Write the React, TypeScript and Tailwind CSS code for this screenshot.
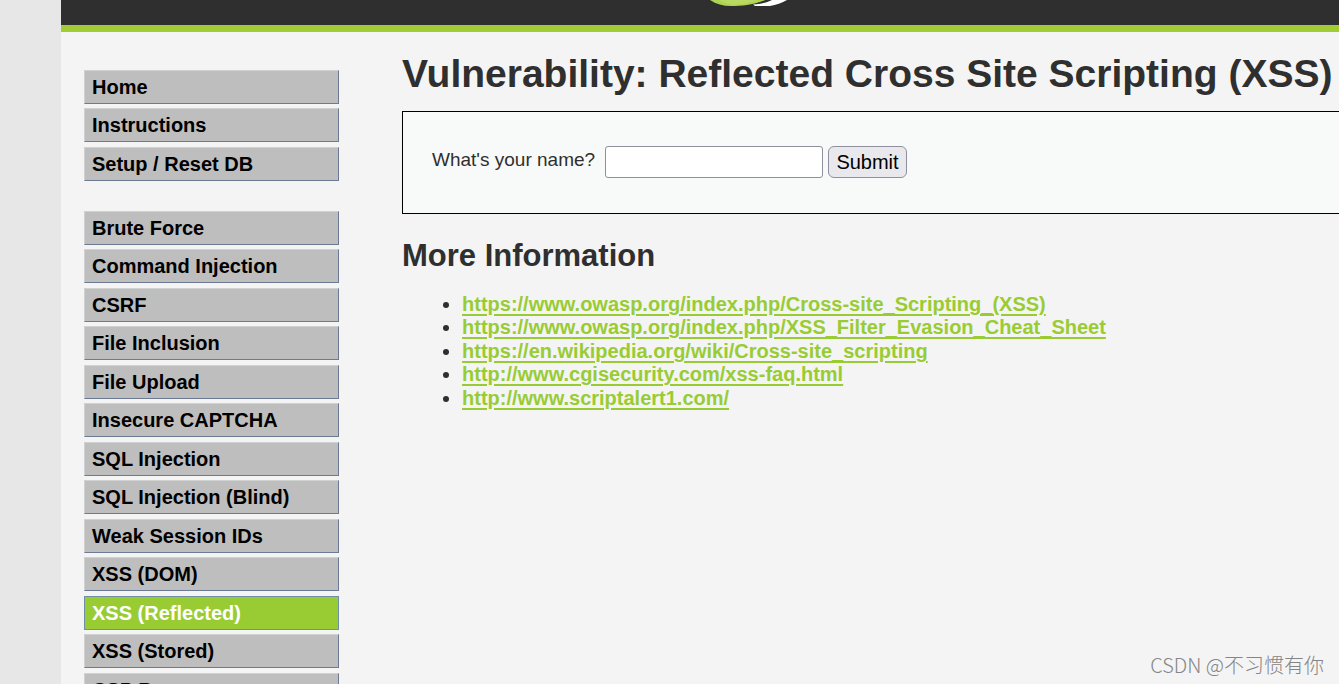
import React from "react";

const menuGroups = [
  ["Home", "Instructions", "Setup / Reset DB"],
  [
    "Brute Force",
    "Command Injection",
    "CSRF",
    "File Inclusion",
    "File Upload",
    "Insecure CAPTCHA",
    "SQL Injection",
    "SQL Injection (Blind)",
    "Weak Session IDs",
    "XSS (DOM)",
    "XSS (Reflected)",
    "XSS (Stored)",
    "CSP Bypass",
  ],
];

const links = [
  "https://www.owasp.org/index.php/Cross-site_Scripting_(XSS)",
  "https://www.owasp.org/index.php/XSS_Filter_Evasion_Cheat_Sheet",
  "https://en.wikipedia.org/wiki/Cross-site_scripting",
  "http://www.cgisecurity.com/xss-faq.html",
  "http://www.scriptalert1.com/",
];

const Header: React.FC = () => (
  <header className="h-8 pl-[98px] flex justify-center border-b-[7px] border-[#a1cc33] bg-[#2f2f2f]">
    <svg className="w-20 h-[6px]" viewBox="0 0 80 6" aria-hidden="true">
      <path d="M1 0C7 4 14 6 22 6C34 6 43 5 57 0Z" fill="#add352" />
      <path d="M10 0C15 3 20 4.500 25 4.500C33 4.500 40 3 49 0Z" fill="#b9d962" />
      <path d="M57 0L44 4.500V6H66C70 5 74 3 80 0Z" fill="#2f2f2f" />
      <path d="M44 4.500C52 4 58 2.500 63 0H78C73 3 67 5 61 6H46Z" fill="#fff" />
    </svg>
  </header>
);

const Menu: React.FC = () => (
  <nav className="w-[255px] shrink-0 pt-[38px] flex flex-col gap-[26px]">
    {menuGroups.map((group) => (
      <ul key={group[0]}>
        {group.map((item) => (
          <li key={item} className="mb-1 even:mb-[5px]">
            <a
              href="#"
              className={
                item === "XSS (Reflected)"
                  ? "block h-[34px] px-[7px] border border-[#6f8fa8] bg-[#99cc33] text-white font-bold leading-8"
                  : "block h-[34px] px-[7px] border border-t-[#d0d2d2] border-l-[#d0d2d2] border-r-[#6c7a94] border-b-[#6c7a94] bg-[#bebebe] text-black font-bold leading-8"
              }
            >
              {item}
            </a>
          </li>
        ))}
      </ul>
    ))}
  </nav>
);

const App: React.FC = () => {
  return (
    <div className="relative h-screen overflow-hidden bg-[#e7e7e7] pl-[61px] font-['Liberation_Sans',Arial,sans-serif] text-[20px] text-[#2f2f2f]">
      <div className="min-h-full bg-[#f4f4f4]">
        <Header />

        <div className="flex gap-[63px] pl-[23px]">
          <Menu />

          <main className="flex-1 min-w-0 pt-[18px]">
            <h1 className="text-[39px] leading-[48px] font-bold whitespace-nowrap">
              Vulnerability: Reflected Cross Site Scripting (XSS)
            </h1>

            <form
              className="mt-[13px] h-[103px] pl-[29px] pt-[34px] flex items-start gap-[5px] border-y border-l border-black bg-[#f8faf9]"
              onSubmit={(e) => e.preventDefault()}
            >
              <label htmlFor="name" className="w-[168px] text-[19px] leading-7 whitespace-nowrap">
                What's your name?
              </label>
              <input
                id="name"
                type="text"
                className="w-[218px] h-8 px-1 rounded-[3px] border border-[#8f8f9d] bg-white"
              />
              <button
                type="submit"
                className="w-[79px] h-8 rounded-md border border-[#8f8f9d] bg-[#e9e9ed] text-black"
              >
                Submit
              </button>
            </form>

            <h2 className="mt-6 text-[31px] leading-9 font-bold">More Information</h2>
            <ul className="mt-[18px] pl-[60px] list-disc">
              {links.map((link) => (
                <li key={link} className="leading-6 even:leading-[23px]">
                  <a
                    href={link}
                    className="font-bold text-[#99cc33] underline decoration-2 underline-offset-3"
                  >
                    {link}
                  </a>
                </li>
              ))}
            </ul>
          </main>
        </div>
      </div>

      <div className="absolute right-[15px] bottom-[5px] text-[20px] leading-7 text-[#858585] font-['Noto_Sans_CJK_SC',sans-serif] font-light">
        CSDN @不习惯有你
      </div>
    </div>
  );
};

export default App;
